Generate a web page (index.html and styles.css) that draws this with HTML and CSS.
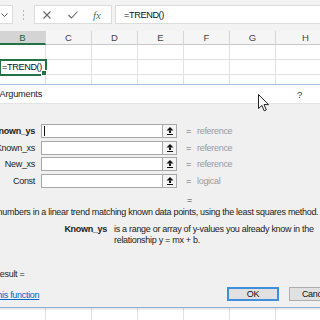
FILE: index.html
```html
<!DOCTYPE html>
<html>
<head>
<meta charset="utf-8">
<link rel="stylesheet" href="styles.css">
</head>
<body>
<div class="app">
  <div class="formula-bar">
    <div class="namebox">
      <svg width="7" height="4" viewBox="0 0 7 4"><path d="M0.5 0.5 L3.5 3.5 L6.5 0.5" fill="none" stroke="#555" stroke-width="1"/></svg>
    </div>
    <div class="grip"><span></span><span></span><span></span></div>
    <div class="fx-tools">
      <svg class="ic-x" width="8" height="8" viewBox="0 0 8 8"><path d="M0.5 0.5 L7.5 7.5 M7.5 0.5 L0.5 7.5" stroke="#666" stroke-width="1.1"/></svg>
      <svg class="ic-check" width="10" height="8" viewBox="0 0 10 8"><path d="M0.5 4 L3.5 7 L9.5 0.5" fill="none" stroke="#666" stroke-width="1.1"/></svg>
      <span class="fx">fx</span>
    </div>
    <div class="formula-input">=TREND()</div>
  </div>

  <div class="sheet">
    <div class="row hdr">
      <div class="cell sel">B</div><div class="cell">C</div><div class="cell">D</div><div class="cell">E</div><div class="cell">F</div><div class="cell">G</div><div class="cell">H</div>
    </div>
    <div class="row"><div class="cell"></div><div class="cell"></div><div class="cell"></div><div class="cell"></div><div class="cell"></div><div class="cell"></div><div class="cell"></div></div>
    <div class="row"><div class="cell active">=TREND()</div><div class="cell"></div><div class="cell"></div><div class="cell"></div><div class="cell"></div><div class="cell"></div><div class="cell"></div></div>
    <div class="row"><div class="cell"></div><div class="cell"></div><div class="cell"></div><div class="cell"></div><div class="cell"></div><div class="cell"></div><div class="cell"></div></div>
    <div class="row tail"><div class="cell"></div><div class="cell"></div><div class="cell"></div><div class="cell"></div><div class="cell"></div><div class="cell"></div><div class="cell"></div></div>
  </div>

  <div class="dialog">
    <div class="dlg-title">
      <span class="title-text">Function Arguments</span>
      <span class="help">?</span>
    </div>
    <div class="dlg-body">
      <div class="args">
        <div class="arg-row">
          <div class="arg-label bold">Known_ys</div>
          <div class="arg-input"><span class="caret"></span></div>
          <div class="ref-btn"><svg width="12" height="12" viewBox="0 0 12 12"><path d="M2.5 5.5 L6 2 L9.5 5.5 Z" fill="#111"/><rect x="5" y="5.5" width="2" height="2.5" fill="#111"/><rect x="3" y="9" width="6" height="1" fill="#111"/></svg></div>
          <div class="arg-eq">=</div>
          <div class="arg-val">reference</div>
        </div>
        <div class="arg-row">
          <div class="arg-label">Known_xs</div>
          <div class="arg-input"></div>
          <div class="ref-btn"><svg width="12" height="12" viewBox="0 0 12 12"><path d="M2.5 5.5 L6 2 L9.5 5.5 Z" fill="#111"/><rect x="5" y="5.5" width="2" height="2.5" fill="#111"/><rect x="3" y="9" width="6" height="1" fill="#111"/></svg></div>
          <div class="arg-eq">=</div>
          <div class="arg-val">reference</div>
        </div>
        <div class="arg-row">
          <div class="arg-label">New_xs</div>
          <div class="arg-input"></div>
          <div class="ref-btn"><svg width="12" height="12" viewBox="0 0 12 12"><path d="M2.5 5.5 L6 2 L9.5 5.5 Z" fill="#111"/><rect x="5" y="5.5" width="2" height="2.5" fill="#111"/><rect x="3" y="9" width="6" height="1" fill="#111"/></svg></div>
          <div class="arg-eq">=</div>
          <div class="arg-val">reference</div>
        </div>
        <div class="arg-row">
          <div class="arg-label">Const</div>
          <div class="arg-input"></div>
          <div class="ref-btn"><svg width="12" height="12" viewBox="0 0 12 12"><path d="M2.5 5.5 L6 2 L9.5 5.5 Z" fill="#111"/><rect x="5" y="5.5" width="2" height="2.5" fill="#111"/><rect x="3" y="9" width="6" height="1" fill="#111"/></svg></div>
          <div class="arg-eq">=</div>
          <div class="arg-val">logical</div>
        </div>
      </div>
      <div class="result-eq">=</div>
      <div class="desc">Returns numbers in a linear trend matching known data points, using the least squares method.</div>
      <div class="arg-help">
        <div class="arg-help-name">Known_ys</div>
        <div class="arg-help-text">is a range or array of y-values you already know in the relationship y = mx + b.</div>
      </div>
      <div class="formula-result">Formula result =</div>
      <div class="dlg-footer">
        <a class="help-link">Help on this function</a>
        <div class="buttons">
          <div class="btn default">OK</div>
          <div class="btn">Cancel</div>
        </div>
      </div>
    </div>
  </div>

  <svg class="cursor" width="12" height="18" viewBox="0 0 12 18"><path d="M0.5 0.5 L0.5 14.5 L3.8 11.4 L6.2 16.8 L8.3 15.9 L6 10.6 L10.5 10.6 Z" fill="#fff" stroke="#222" stroke-width="1" stroke-linejoin="round"/></svg>
</div>
</body>
</html>
```

FILE: styles.css
```css
* { box-sizing: border-box; }
html, body { margin: 0; padding: 0; }
body {
  width: 320px;
  height: 320px;
  overflow: hidden;
  background: #fff;
  font-family: "Liberation Sans", Arial, sans-serif;
  font-size: 9px;
  letter-spacing: -0.3px;
  color: #222;
}
.app { position: relative; width: 320px; height: 320px; overflow: hidden; }

/* formula bar */
.formula-bar {
  display: flex;
  height: 31px;
  padding: 5px 0 7px;
  background: #f3f3f3;
}
.namebox {
  width: 13px;
  background: #fff;
  border: 1px solid #dcdcdc;
  border-left: 0;
  display: flex;
  align-items: center;
  padding-left: 1px;
}
.grip {
  width: 21px;
  display: flex;
  flex-direction: column;
  align-items: center;
  justify-content: center;
  gap: 2px;
}
.grip span { width: 1px; height: 2px; background: #b8b8b8; }
.fx-tools {
  width: 78px;
  background: #fff;
  border: 1px solid #dcdcdc;
  display: flex;
  align-items: center;
  padding-left: 8px;
}
.ic-check { margin-left: 17px; }
.fx {
  margin-left: 15px;
  font-family: "Liberation Serif", serif;
  font-style: italic;
  font-size: 11px;
  letter-spacing: 0;
  color: #4f7a55;
}
.formula-input {
  flex: 1;
  margin-left: 3px;
  background: #fff;
  border: 1px solid #dcdcdc;
  border-right: 0;
  padding-left: 8px;
  display: flex;
  align-items: center;
  font-size: 9.2px;
  letter-spacing: -0.4px;
  color: #111;
}

/* sheet */
.row { display: flex; height: 15px; }
.cell {
  width: 46px;
  flex: none;
  border-right: 1px solid #e1e1e1;
  border-bottom: 1px solid #e1e1e1;
}
.row .cell:last-child { width: 60px; }
.hdr { height: 14px; background: #f5f5f5; }
.hdr .cell {
  border-right: 1px solid #d6d6d6;
  border-bottom: 1px solid #c8c8c8;
  text-align: center;
  font-size: 9.5px;
  letter-spacing: 0;
  line-height: 13px;
  color: #444;
}
.hdr .cell.sel {
  background: #d4d4d4;
  border-bottom: 2px solid #217346;
  color: #1d5f3a;
}
.cell.active {
  position: relative;
  outline: 2px solid #217346;
  outline-offset: -1px;
  font-size: 9.2px;
  letter-spacing: -0.4px;
  line-height: 14px;
  padding-left: 2px;
  color: #111;
  white-space: nowrap;
}
.cell.active::after {
  content: "";
  position: absolute;
  right: -2px;
  bottom: -2px;
  width: 4px;
  height: 4px;
  background: #217346;
  border: 1px solid #fff;
}
.row.tail { height: 245px; }

/* dialog */
.dialog {
  position: absolute;
  top: 84px;
  left: -32px;
  width: 380px;
  height: 224px;
  background: #f0f0f0;
  border-top: 1px solid #a9bfd9;
  border-bottom: 1px solid #8fb0d6;
  box-shadow: 0 1px 2px rgba(0, 0, 0, 0.15);
  display: flex;
  flex-direction: column;
}
.dlg-title {
  height: 19px;
  flex: none;
  background: #fff;
  border-bottom: 1px solid #e4e4e4;
  display: flex;
  align-items: center;
  justify-content: space-between;
  padding-right: 46px;
  font-size: 9.2px;
  letter-spacing: -0.2px;
  color: #222;
}
.title-text { margin-left: -4px; }
.help { font-size: 9.5px; color: #333; }
.dlg-body {
  flex: 1;
  display: flex;
  flex-direction: column;
  padding: 20px 7px 6px 0;
}
.args { display: flex; flex-direction: column; gap: 2.5px; }
.arg-row { display: flex; align-items: center; height: 14px; }
.arg-label {
  width: 67px;
  flex: none;
  margin-right: 6px;
  display: flex;
  justify-content: flex-end;
  white-space: nowrap;
}
.bold { font-weight: bold; }
.arg-input {
  width: 122px;
  height: 14px;
  flex: none;
  background: #fff;
  border: 1px solid #a8a8a8;
  padding: 1px 0 0 2px;
}
.caret { display: block; width: 1px; height: 10px; background: #111; }
.ref-btn {
  width: 14px;
  height: 14px;
  flex: none;
  background: #f4f4f4;
  border: 1px solid #a8a8a8;
  border-left: 0;
  display: flex;
  align-items: center;
  justify-content: center;
}
.arg-eq { margin-left: 9px; width: 11px; color: #666; }
.arg-val { color: #9a9a9a; }
.result-eq {
  margin-top: 7px;
  height: 11px;
  line-height: 11px;
  padding-left: 219px;
  color: #444;
}
.desc {
  margin-top: 1px;
  margin-left: -2px;
  height: 11px;
  line-height: 11px;
  white-space: nowrap;
}
.arg-help {
  margin-top: 6px;
  display: flex;
  line-height: 11px;
}
.arg-help-name {
  width: 139px;
  flex: none;
  text-align: right;
  font-weight: bold;
  margin-right: 7px;
}
.arg-help-text { width: 206px; }
.formula-result {
  margin-top: 23px;
  margin-left: -4px;
  height: 11px;
  line-height: 11px;
}
.dlg-footer {
  margin-top: auto;
  display: flex;
  align-items: center;
  justify-content: space-between;
}
.help-link {
  color: #0066cc;
  text-decoration: underline;
  margin-top: 2px;
  margin-left: -4px;
}
.buttons { display: flex; gap: 10px; }
.btn {
  width: 52px;
  height: 14px;
  background: #e1e1e1;
  border: 1px solid #adadad;
  display: flex;
  align-items: center;
  justify-content: center;
  color: #111;
}
.btn.default { border: 2px solid #3f8fdc; }

.cursor { position: absolute; left: 258px; top: 94px; }
```
